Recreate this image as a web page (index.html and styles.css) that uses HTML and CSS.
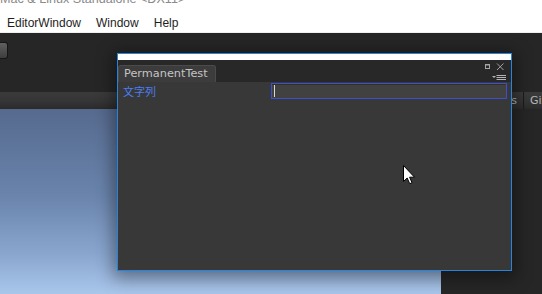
FILE: index.html
```html
<!DOCTYPE html>
<html>
<head>
<meta charset="utf-8">
<link rel="stylesheet" href="styles.css">
</head>
<body>
<div class="menubar">
  <div class="title"><span>Mac &amp; Linux Standalone &lt;DX11&gt;</span></div>
  <div class="menu"><span>EditorWindow</span><span>Window</span><span>Help</span></div>
</div>
<div class="toolbar"><div class="tbtn"></div></div>
<div class="scenebar">
  <span class="sb-eff">Effects</span>
  <span class="sb-sep"></span>
  <span class="sb-giz">Gizmos</span>
</div>
<div class="main">
  <div class="scene"></div>
  <div class="side"></div>
</div>

<div class="win">
  <div class="win-top"></div>
  <div class="win-head">
    <div class="tab">PermanentTest</div>
    <svg class="icons" width="24" height="19" viewBox="0 0 24 19">
      <rect x="1.5" y="2.5" width="4" height="4" fill="none" stroke="#a6a6a6" stroke-width="1"/>
      <rect x="1" y="2" width="5" height="1.5" fill="#a6a6a6"/>
      <path d="M13 1.5 L19.5 8 M19.5 1.5 L13 8" stroke="#a0a0a0" stroke-width="1" fill="none"/>
      <path d="M8 14 L12 14 L10 16 Z" fill="#b4b4b4"/>
      <path d="M12.5 13.5 H22 M12.5 15.5 H22 M12.5 17.5 H22" stroke="#b4b4b4" stroke-width="1"/>
    </svg>
  </div>
  <div class="win-body">
    <div class="row">
      <div class="label">文字列</div>
      <div class="field"><div class="caret"></div></div>
    </div>
  </div>
</div>

<svg class="cursor" width="13" height="20" viewBox="0 0 13 20">
  <path d="M0.5 0.5 L0.5 16.5 L4.2 13 L6.7 18.7 L9 17.7 L6.6 12.2 L11.5 12.2 Z" fill="#ffffff" stroke="#000000" stroke-width="1" stroke-linejoin="miter"/>
</svg>
</body>
</html>
```

FILE: styles.css
```css
html, body {
  margin: 0;
  padding: 0;
}
body {
  width: 542px;
  height: 294px;
  overflow: hidden;
  position: relative;
  background: #262626;
  font-family: "Liberation Sans", Arial, sans-serif;
}
.menubar {
  height: 32px;
  background: #ffffff;
  border-bottom: 1px solid #efefef;
}
.title {
  height: 5px;
  overflow: hidden;
  color: #8a8a8a;
  font-size: 12.6px;
  line-height: 14px;
}
.title span {
  display: block;
  margin-top: -8px;
  white-space: nowrap;
}
.menu {
  display: flex;
  gap: 15px;
  padding-left: 7px;
  margin-top: 11px;
  font-size: 12px;
  line-height: 14px;
  color: #1e1e1e;
}
.toolbar {
  height: 50px;
}
.tbtn {
  width: 8px;
  height: 17px;
  margin-top: 9px;
  box-sizing: border-box;
  border: 1px solid #161616;
  border-left: 0;
  border-radius: 0 3px 3px 0;
  background: linear-gradient(#606060, #3d3d3d);
}
.scenebar {
  height: 17px;
  display: flex;
  align-items: center;
  background: linear-gradient(#3b3b3b, #353535 55%, #2b2b2b);
  font-family: "DejaVu Sans", sans-serif;
  font-size: 11px;
  color: #b4b4b4;
  white-space: nowrap;
  overflow: hidden;
}
.sb-eff {
  flex: 0 0 517px;
  text-align: right;
}
.sb-sep {
  flex: 0 0 1px;
  height: 17px;
  background: #1c1c1c;
  margin-left: 6px;
}
.sb-giz {
  margin-left: 6px;
  flex: none;
}
.main {
  display: flex;
  height: 194px;
}
.scene {
  width: 441px;
  background: linear-gradient(to bottom, #566a8e 0%, #6a84ac 45%, #8aa6cf 75%, #b0cdf1 100%);
}
.side {
  flex: 1;
  background: #262626;
}
.win {
  position: absolute;
  left: 117px;
  top: 53px;
  width: 395px;
  height: 218px;
  box-sizing: border-box;
  border: 1px solid #2784de;
  box-shadow: 0 3px 16px 4px rgba(0, 0, 0, 0.4);
  display: flex;
  flex-direction: column;
  z-index: 2;
}
.win-top {
  height: 6px;
  flex: none;
  background: #ffffff;
}
.win-head {
  height: 22px;
  flex: none;
  box-sizing: border-box;
  padding-top: 5px;
  background: #282828;
  display: flex;
}
.tab {
  width: 98px;
  height: 17px;
  box-sizing: border-box;
  background: #3c3c3c;
  border: 1px solid #4b4b4b;
  border-bottom: 0;
  border-radius: 3px 3px 0 0;
  padding-left: 5px;
  font-family: "DejaVu Sans", sans-serif;
  font-size: 11.3px;
  line-height: 16px;
  color: #c4c4c4;
  white-space: nowrap;
}
.icons {
  margin-left: auto;
  margin-top: -3px;
  margin-right: 3px;
  flex: none;
}
.win-body {
  flex: 1;
  background: #383838;
  padding-top: 1px;
}
.row {
  display: flex;
  align-items: center;
  height: 16px;
}
.label {
  width: 153px;
  box-sizing: border-box;
  padding-left: 5px;
  color: #4c7df2;
  font-family: "Noto Sans CJK JP", sans-serif;
  font-size: 11px;
  line-height: 16px;
}
.field {
  width: 236px;
  height: 16px;
  box-sizing: border-box;
  border: 1px solid #3b4fcf;
  background: #414141;
  box-shadow: inset 0 1px 0 #2f2f2f;
}
.caret {
  width: 1px;
  height: 12px;
  margin: 1px 0 0 2px;
  background: #d8d8d8;
}
.cursor {
  position: absolute;
  left: 403px;
  top: 165px;
  z-index: 3;
}
```
